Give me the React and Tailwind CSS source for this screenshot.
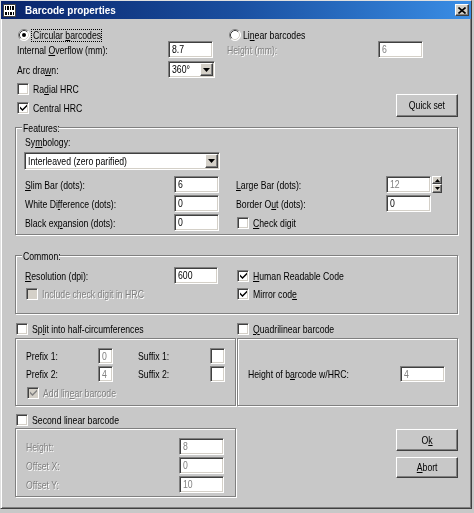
import React from 'react';

const SUNKEN =
  'border border-t-[#808080] border-l-[#808080] border-r-white border-b-white shadow-[inset_1px_1px_0_#404040,inset_-1px_-1px_0_#d4d0c8]';
const RAISED =
  'border border-t-white border-l-white border-r-[#404040] border-b-[#404040] shadow-[inset_-1px_-1px_0_#808080]';
const GROUP = 'border border-[#808080] shadow-[1px_1px_0_#fff,inset_1px_1px_0_#fff]';

// the old dialog font is much narrower than Liberation Sans, so squeeze it
const NARROW = 'inline-block origin-left scale-x-[0.79] whitespace-nowrap';

const U = ({ children }) => <span className="underline decoration-1 underline-offset-[1px]">{children}</span>;

const Label = ({ children, disabled, className = '' }) => (
  <span
    className={`${NARROW} text-[11px] leading-[12px] ${
      disabled ? 'text-[#808080] [text-shadow:1px_1px_0_#fff]' : 'text-black'
    } ${className}`}
  >
    {children}
  </span>
);

const Field = ({ value, disabled, className = '' }) => (
  <div className={`${SUNKEN} bg-white flex items-center pl-[3px] shrink-0 ${className}`}>
    <span className={`${NARROW} text-[11px] leading-none ${disabled ? 'text-[#808080]' : 'text-black'}`}>{value}</span>
  </div>
);

const DownArrow = () => (
  <svg width="7" height="4" viewBox="0 0 7 4">
    <path d="M0 0H7L3.5 4Z" fill="#000" />
  </svg>
);

const Combo = ({ value, className = '' }) => (
  <div className={`${SUNKEN} bg-white flex items-stretch p-[1px] shrink-0 ${className}`}>
    <div className="flex-1 flex items-center pl-[2px]">
      <span className={`${NARROW} text-[11px] leading-none`}>{value}</span>
    </div>
    <div className={`${RAISED} w-[13px] bg-[#d4d0c8] flex items-center justify-center`}>
      <DownArrow />
    </div>
  </div>
);

const Spin = () => (
  <div className="flex flex-col w-[10px] h-[17px] ml-[1px] shrink-0">
    <div className={`${RAISED} h-[8px] bg-[#d4d0c8] flex items-center justify-center`}>
      <svg width="5" height="3" viewBox="0 0 5 3">
        <path d="M0 3H5L2.5 0Z" fill="#000" />
      </svg>
    </div>
    <div className={`${RAISED} h-[9px] bg-[#d4d0c8] flex items-center justify-center`}>
      <svg width="5" height="3" viewBox="0 0 5 3">
        <path d="M0 0H5L2.5 3Z" fill="#000" />
      </svg>
    </div>
  </div>
);

const Check = ({ checked, disabled, className = '' }) => (
  <div
    className={`${SUNKEN} w-[12px] h-[12px] shrink-0 flex items-center justify-center ${
      disabled ? 'bg-[#d4d0c8]' : 'bg-white'
    } ${className}`}
  >
    {checked && (
      <svg width="7" height="7" viewBox="0 0 7 7">
        <path d="M0 2.5L2.5 5L7 0.5V2.5L2.5 7L0 4.5Z" fill={disabled ? '#808080' : '#000'} />
      </svg>
    )}
  </div>
);

const Radio = ({ checked }) => (
  <svg width="12" height="12" viewBox="0 0 12 12" className="shrink-0">
    <circle cx="6" cy="6" r="5.5" fill="#fff" />
    <path d="M2.11 9.89A5.5 5.5 0 0 1 9.89 2.11" fill="none" stroke="#808080" />
    <path d="M2.82 9.18A4.5 4.5 0 0 1 9.18 2.82" fill="none" stroke="#404040" />
    <path d="M9.89 2.11A5.5 5.5 0 0 1 2.11 9.89" fill="none" stroke="#fff" />
    <path d="M9.18 2.82A4.5 4.5 0 0 1 2.82 9.18" fill="none" stroke="#d4d0c8" />
    {checked && <circle cx="6" cy="6" r="2" fill="#000" />}
  </svg>
);

const Button = ({ children, className = '' }) => (
  <div className={`${RAISED} bg-[#c8c8c8] flex items-center justify-center shrink-0 ${className}`}>
    <span className="inline-block origin-center scale-x-[0.79] whitespace-nowrap text-[11px] leading-none">
      {children}
    </span>
  </div>
);

const Legend = ({ children }) => (
  <div className="-mt-[6px] ml-[6px] self-start w-[37px] pl-[1px] h-[12px] bg-[#c8c8c8] flex items-center">
    <Label>{children}</Label>
  </div>
);

const TitleIcon = () => (
  <svg width="13" height="13" viewBox="0 0 13 13" className="shrink-0">
    <rect x="0" y="0" width="13" height="13" fill="#d4d0c8" />
    <rect x="0.5" y="0.5" width="12" height="12" fill="#fff" stroke="#404040" />
    <rect x="2" y="2" width="1" height="4" fill="#000" />
    <rect x="4" y="2" width="2" height="4" fill="#000" />
    <rect x="7" y="2" width="1" height="4" fill="#000" />
    <rect x="9" y="2" width="2" height="4" fill="#000" />
    <rect x="2" y="8" width="2" height="3" fill="#000" />
    <rect x="5" y="8" width="1" height="3" fill="#000" />
    <rect x="7" y="8" width="2" height="3" fill="#000" />
    <rect x="10" y="8" width="1" height="3" fill="#000" />
  </svg>
);

export default function App() {
  return (
    <div className="w-[474px] h-[513px] bg-[#c8c8c8] overflow-hidden font-['Liberation_Sans',Arial,sans-serif] text-[11px] text-black">
      <div className="w-[472px] h-[509px] flex flex-col border border-t-[#e0e0e0] border-l-[#e0e0e0] border-r-[#404040] border-b-[#404040] shadow-[inset_1px_1px_0_#fff,inset_-1px_-1px_0_#808080]">
        {/* title bar */}
        <div className="h-[18px] flex items-center bg-linear-to-r from-[#0a246a] via-[#1a4fa0] to-[#3a8ee6] pl-[2px] pr-[2px]">
          <TitleIcon />
          <span className="ml-[9px] inline-block origin-left scale-x-[0.9] text-white font-bold text-[11px] leading-none whitespace-nowrap">
            Barcode properties
          </span>
          <div className={`${RAISED} ml-auto w-[14px] h-[12px] bg-[#d4d0c8] flex items-center justify-center`}>
            <svg width="8" height="7" viewBox="0 0 8 7">
              <path d="M0.5 0.5L7.5 6.5M7.5 0.5L0.5 6.5" stroke="#000" strokeWidth="1.6" />
            </svg>
          </div>
        </div>

        {/* top options */}
        <div className="mt-[10px] h-[12px] flex items-center">
          <div className="ml-[17px] w-[211px] flex items-center">
            <Radio checked />
            <div className="ml-[1px] w-[71px] pl-[1px] border border-dotted border-black h-[13px] flex items-center">
              <Label>
                Circular <U>b</U>arcodes
              </Label>
            </div>
          </div>
          <Radio />
          <Label className="ml-[2px]">
            Li<U>n</U>ear barcodes
          </Label>
        </div>

        <div className="h-[17px] flex items-center">
          <Label className="ml-[16px] w-[151px]">
            Internal <U>O</U>verflow (mm):
          </Label>
          <Field value="8.7" className="w-[45px] h-[17px]" />
          <Label disabled className="ml-[14px] w-[151px]">
            Height (mm):
          </Label>
          <Field value="6" disabled className="w-[45px] h-[17px]" />
        </div>

        <div className="mt-[3px] h-[17px] flex items-center">
          <Label className="ml-[16px] w-[151px]">
            Arc dra<U>w</U>n:
          </Label>
          <Combo value="360°" className="w-[47px] h-[17px]" />
        </div>

        <div className="mt-[4px] flex items-start">
          <div className="ml-[16px] w-[379px] flex flex-col gap-[6px]">
            <div className="h-[13px] flex items-center">
              <Check />
              <Label className="ml-[4px]">
                Ra<U>d</U>ial HRC
              </Label>
            </div>
            <div className="h-[13px] flex items-center">
              <Check checked />
              <Label className="ml-[4px]">Central HRC</Label>
            </div>
          </div>
          <Button className="mt-[12px] w-[62px] h-[23px]">Quick set</Button>
        </div>

        {/* Features */}
        <div className={`${GROUP} mt-[10px] ml-[14px] w-[443px] h-[108px] flex flex-col`}>
          <Legend>Features:</Legend>
          <Label className="mt-[2px] ml-[9px] h-[12px] self-start">
            Sy<U>m</U>bology:
          </Label>
          <Combo value="Interleaved (zero parified)" className="mt-[4px] ml-[8px] w-[196px] h-[18px]" />

          <div className="mt-[6px] h-[17px] flex items-center">
            <Label className="ml-[9px] w-[149px]">
              <U>S</U>lim Bar (dots):
            </Label>
            <Field value="6" className="w-[45px] h-[17px]" />
            <Label className="ml-[17px] w-[150px]">
              <U>L</U>arge Bar (dots):
            </Label>
            <Field value="12" disabled className="w-[45px] h-[17px]" />
            <Spin />
          </div>
          <div className="mt-[2px] h-[17px] flex items-center">
            <Label className="ml-[9px] w-[149px]">
              White Di<U>f</U>ference (dots):
            </Label>
            <Field value="0" className="w-[45px] h-[17px]" />
            <Label className="ml-[17px] w-[150px]">
              Border O<U>u</U>t (dots):
            </Label>
            <Field value="0" className="w-[45px] h-[17px]" />
          </div>
          <div className="mt-[2px] h-[17px] flex items-center">
            <Label className="ml-[9px] w-[149px]">
              Black ex<U>p</U>ansion (dots):
            </Label>
            <Field value="0" className="w-[45px] h-[17px]" />
            <Check className="ml-[18px]" />
            <Label className="ml-[4px]">
              <U>C</U>heck digit
            </Label>
          </div>
        </div>

        {/* Common */}
        <div className={`${GROUP} mt-[20px] ml-[14px] w-[443px] h-[59px] flex flex-col`}>
          <Legend>Common:</Legend>
          <div className="mt-[5px] h-[17px] flex items-center">
            <Label className="ml-[9px] w-[149px]">
              <U>R</U>esolution (dpi):
            </Label>
            <Field value="600" className="w-[44px] h-[17px]" />
            <Check checked className="ml-[19px]" />
            <Label className="ml-[4px]">
              <U>H</U>uman Readable Code
            </Label>
          </div>
          <div className="mt-[3px] h-[13px] flex items-center">
            <div className="w-[221px] flex items-center">
              <Check disabled className="ml-[10px]" />
              <Label disabled className="ml-[4px]">
                Include check digit in HRC
              </Label>
            </div>
            <Check checked />
            <Label className="ml-[4px]">
              Mirror cod<U>e</U>
            </Label>
          </div>
        </div>

        {/* split / quadrilinear */}
        <div className="mt-[8px] h-[13px] flex items-center">
          <div className="ml-[15px] w-[221px] flex items-center">
            <Check />
            <Label className="ml-[4px]">
              Sp<U>l</U>it into half-circumferences
            </Label>
          </div>
          <Check />
          <Label className="ml-[4px]">
            <U>Q</U>uadrilinear barcode
          </Label>
        </div>

        <div className="mt-[3px] flex items-start">
          <div className={`${GROUP} ml-[14px] w-[221px] h-[68px] flex flex-col`}>
            <div className="mt-[9px] h-[16px] flex items-center">
              <Label className="ml-[10px] w-[72px]">Prefix 1:</Label>
              <Field value="0" disabled className="w-[15px] h-[16px]" />
              <Label className="ml-[25px] w-[72px]">Suffix 1:</Label>
              <Field value="" className="w-[15px] h-[16px]" />
            </div>
            <div className="mt-[2px] h-[16px] flex items-center">
              <Label className="ml-[10px] w-[72px]">Prefix 2:</Label>
              <Field value="4" disabled className="w-[15px] h-[16px]" />
              <Label className="ml-[25px] w-[72px]">Suffix 2:</Label>
              <Field value="" className="w-[15px] h-[16px]" />
            </div>
            <div className="mt-[4px] h-[13px] flex items-center">
              <Check checked disabled className="ml-[11px]" />
              <Label disabled className="ml-[4px]">
                Add lin<U>e</U>ar barcode
              </Label>
            </div>
          </div>
          <div className={`${GROUP} ml-[1px] w-[221px] h-[68px] flex flex-col`}>
            <div className="mt-[27px] h-[16px] flex items-center">
              <Label className="ml-[10px] w-[152px]">
                Height of b<U>a</U>rcode w/HRC:
              </Label>
              <Field value="4" disabled className="w-[45px] h-[16px]" />
            </div>
          </div>
        </div>

        {/* second linear */}
        <div className="mt-[7px] h-[13px] flex items-center">
          <Check className="ml-[15px]" />
          <Label className="ml-[4px]">Second linear barcode</Label>
        </div>

        <div className="mt-[2px] flex items-start">
          <div className={`${GROUP} ml-[14px] w-[221px] h-[69px] flex flex-col`}>
            <div className="mt-[9px] h-[17px] flex items-center">
              <Label disabled className="ml-[10px] w-[153px]">
                Height:
              </Label>
              <Field value="8" disabled className="w-[45px] h-[17px]" />
            </div>
            <div className="mt-[2px] h-[17px] flex items-center">
              <Label disabled className="ml-[10px] w-[153px]">
                Offset X:
              </Label>
              <Field value="0" disabled className="w-[45px] h-[17px]" />
            </div>
            <div className="mt-[2px] h-[17px] flex items-center">
              <Label disabled className="ml-[10px] w-[153px]">
                Offset Y:
              </Label>
              <Field value="10" disabled className="w-[45px] h-[17px]" />
            </div>
          </div>
          <div className="ml-[160px] mt-[1px] flex flex-col">
            <Button className="w-[62px] h-[22px]">
              O<U>k</U>
            </Button>
            <Button className="mt-[6px] w-[62px] h-[21px]">
              <U>A</U>bort
            </Button>
          </div>
        </div>
      </div>
    </div>
  );
}
